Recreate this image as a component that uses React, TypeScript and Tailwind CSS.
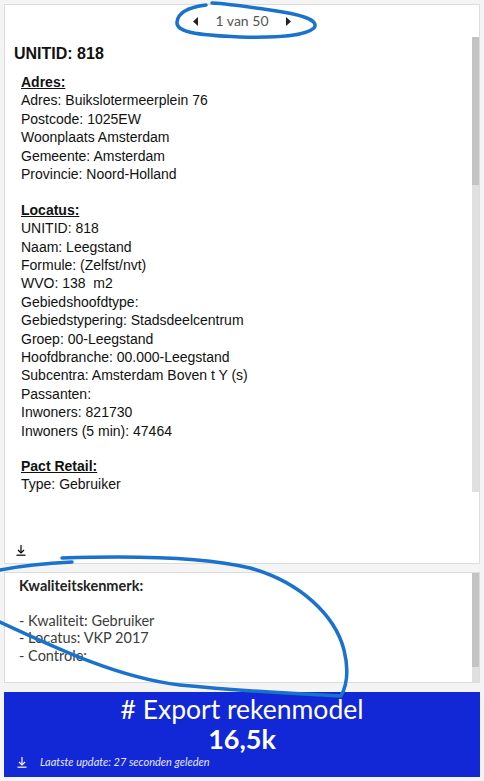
import React from "react";

const sans = { fontFamily: '"Liberation Sans", Arial, sans-serif' };
const avenir = { fontFamily: 'Lato, "Noto Sans", sans-serif' };

function DownloadIcon({ color = "#000" }: { color?: string }) {
  return (
    <svg width="10" height="12" viewBox="0 0 10 12" fill="none" stroke={color} strokeWidth="1.2">
      <line x1="5" y1="1" x2="5" y2="8.5" />
      <polyline points="2,6 5,9 8,6" />
      <line x1="0.5" y1="11.2" x2="9.5" y2="11.2" />
    </svg>
  );
}

export default function App() {
  const addr = [
    "Adres: Buikslotermeerplein 76",
    "Postcode: 1025EW",
    "Woonplaats Amsterdam",
    "Gemeente: Amsterdam",
    "Provincie: Noord-Holland",
  ];
  const loc = [
    "UNITID: 818",
    "Naam: Leegstand",
    "Formule: (Zelfst/nvt)",
    "WVO: 138\u00a0 m2",
    "Gebiedshoofdtype:",
    "Gebiedstypering: Stadsdeelcentrum",
    "Groep: 00-Leegstand",
    "Hoofdbranche: 00.000-Leegstand",
    "Subcentra: Amsterdam Boven t Y (s)",
    "Passanten:",
    "Inwoners: 821730",
    "Inwoners (5 min): 47464",
  ];
  return (
    <div className="relative w-[484px] h-[781px] bg-[#f4f4f4] p-[4px] flex flex-col overflow-hidden">
      {/* Card 1 */}
      <div className="h-[561px] bg-white border border-[#dcdcdc] flex flex-col">
        <div className="h-[32px] flex items-center justify-center gap-[17px] text-[#555]" style={avenir}>
          <svg width="5" height="9" viewBox="0 0 5 9"><polygon points="5,0 5,9 0,4.5" fill="#222" /></svg>
          <span className="text-[14px] leading-none">1 van 50</span>
          <svg width="5" height="9" viewBox="0 0 5 9"><polygon points="0,0 0,9 5,4.5" fill="#222" /></svg>
        </div>
        <div className="h-[455px] flex">
          <div className="flex-1 overflow-hidden pl-[9px] pt-[7px] text-[#111]" style={sans}>
            <div className="text-[16px] leading-[20px] font-bold">UNITID: 818</div>
            <div className="mt-[9px] pl-[7px] text-[14px] leading-[18.4px]">
              <div className="font-bold underline">Adres:</div>
              {addr.map((l) => (
                <div key={l}>{l}</div>
              ))}
              <div className="h-[17.4px]" />
              <div className="font-bold underline">Locatus:</div>
              {loc.map((l) => (
                <div key={l} className="whitespace-pre">{l}</div>
              ))}
              <div className="h-[16.6px]" />
              <div className="font-bold underline">Pact Retail:</div>
              <div>Type: Gebruiker</div>
            </div>
          </div>
          <div className="w-[7px] flex flex-col">
            <div className="h-[148px] bg-[#c3c3c3]" />
            <div className="flex-1 bg-[#e0e0e0]" />
          </div>
        </div>
        <div className="flex-1 flex items-end pl-[11px] pb-[7px]">
          <DownloadIcon />
        </div>
      </div>

      {/* Card 2 */}
      <div className="mt-[8px] h-[111px] bg-white border border-[#dcdcdc] flex">
        <div className="flex-1 pl-[14px] pt-[4px] text-[14.5px] leading-[17.4px] text-[#3c3c3c]" style={avenir}>
          <div className="font-bold text-[#222]">Kwaliteitskenmerk:</div>
          <div className="h-[17.4px]" />
          <div>- Kwaliteit: Gebruiker</div>
          <div>- Locatus: VKP 2017</div>
          <div>- Controle:</div>
        </div>
        <div className="w-[7px] flex flex-col">
          <div className="h-[94px] bg-[#c3c3c3]" />
          <div className="flex-1 bg-[#e0e0e0]" />
        </div>
      </div>

      {/* Blue indicator */}
      <div className="mt-[9px] h-[85px] w-[476px] bg-[#1227d6] flex flex-col items-center text-white" style={avenir}>
        <div className="pt-[3px] text-[26.5px] leading-[29px]">
          # Export rekenmodel
        </div>
        <div className="text-[27px] leading-[30px] font-bold">16,5k</div>
        <div className="self-stretch flex items-center gap-[13px] pl-[13px] mt-[1px]">
          <DownloadIcon color="#fff" />
          <span className="italic text-[11px] leading-[14px] text-[#e6e8ff]">
            Laatste update: 27 seconden geleden
          </span>
        </div>
      </div>

      {/* hand-drawn annotations */}
      <svg className="absolute inset-0 pointer-events-none" width="484" height="781" viewBox="0 0 484 781" fill="none">
        <g stroke="#1a72cc" strokeWidth="3.5" strokeLinecap="round" strokeLinejoin="round">
          <path d="M 206 5 C 190 7, 178 12, 177 22 C 176 32, 195 35, 240 37 C 280 38, 305 36, 314 28 C 320 20, 300 14, 270 10 C 250 7, 230 4, 212 3" />
          <path d="M 0 570 C 20 566, 50 563, 72 562" />
          <path d="M 62 558 C 120 556, 200 556, 250 568 C 300 582, 335 615, 344 650 C 349 670, 347 685, 341 696 C 300 694, 230 690, 180 685 C 120 678, 60 650, 0 622" />
        </g>
      </svg>
    </div>
  );
}
